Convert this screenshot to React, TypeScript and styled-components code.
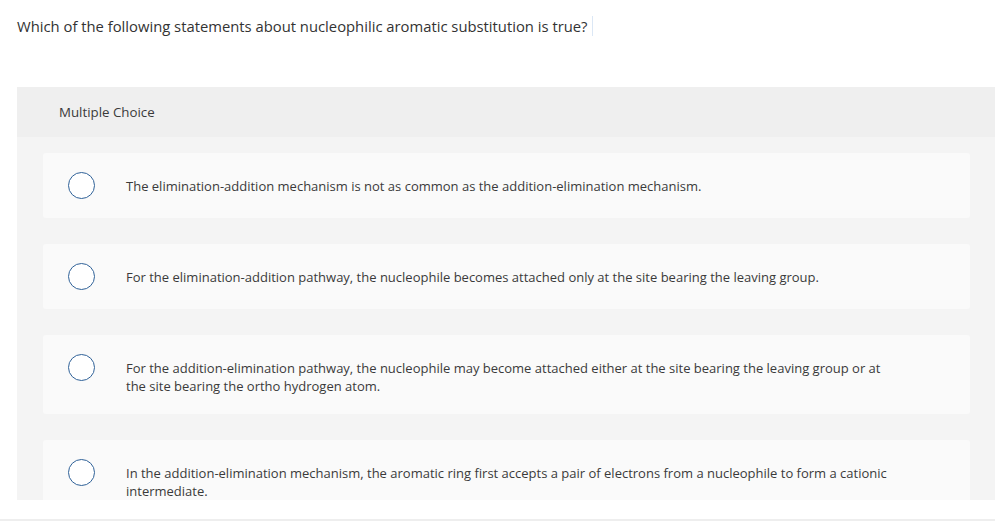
import * as React from 'react';
import styled, {createGlobalStyle} from 'styled-components';

const choices = [
    'The elimination-addition mechanism is not as common as the addition-elimination mechanism.',
    'For the elimination-addition pathway, the nucleophile becomes attached only at the site bearing the leaving group.',
    'For the addition-elimination pathway, the nucleophile may become attached either at the site bearing the leaving group or at the site bearing the ortho hydrogen atom.',
    'In the addition-elimination mechanism, the aromatic ring first accepts a pair of electrons from a nucleophile to form a cationic intermediate.',
];

export default function App() {
    return (
        <>
            <GlobalStyle/>
            <Page>
                <Scroller>
                    <Question>
                        Which of the following statements about nucleophilic aromatic substitution is true?
                        <Caret/>
                    </Question>
                    <Panel>
                        <PanelHeader>Multiple Choice</PanelHeader>
                        <ChoiceList>
                            {choices.map(text => (
                                <Choice key={text}>
                                    <Radio/>
                                    <ChoiceText>{text}</ChoiceText>
                                </Choice>
                            ))}
                        </ChoiceList>
                    </Panel>
                </Scroller>
                <Footer/>
            </Page>
        </>
    );
}

const GlobalStyle = createGlobalStyle`
  html, body {
    margin: 0;
    padding: 0;
    background: #fff;
  }
  body {
    font-family: "Open Sans", "Liberation Sans", sans-serif;
    color: #333;
  }
`;

const Page = styled.div`
  width: 995px;
  height: 525px;
  overflow: hidden;
`;

const Scroller = styled.div`
  height: 500px;
  overflow: hidden;
  padding-left: 17px;
  box-sizing: border-box;
`;

const Question = styled.div`
  padding-top: 16px;
  font-size: 14.8px;
  line-height: 18px;
  color: #333;
  display: flex;
  align-items: center;
`;

const Caret = styled.span`
  display: inline-block;
  width: 1px;
  height: 20px;
  margin-left: 5px;
  background: #dbe7f5;
`;

const Panel = styled.div`
  margin-top: 51px;
  background: #f4f4f4;
`;

const PanelHeader = styled.div`
  height: 50px;
  display: flex;
  align-items: center;
  padding-left: 42px;
  background: #efefef;
  font-size: 13.3px;
  color: #3a3a3a;
`;

const ChoiceList = styled.div`
  display: flex;
  flex-direction: column;
  gap: 26px;
  padding: 16px 25px 26px 26px;
`;

const Choice = styled.div`
  display: flex;
  align-items: flex-start;
  padding: 19px 80px 19px 25px;
  background: #fafafa;
  border-radius: 3px;
`;

const Radio = styled.span`
  flex: none;
  width: 27px;
  height: 27px;
  box-sizing: border-box;
  border: 1.5px solid #2f6198;
  border-radius: 50%;
  background: #fff;
`;

const ChoiceText = styled.div`
  margin-left: 31px;
  padding-top: 5px;
  font-size: 13px;
  line-height: 18px;
  color: #3a3a3a;
`;

const Footer = styled.div`
  height: 25px;
  &::after {
    content: '';
    display: block;
    margin-top: 19px;
    height: 2px;
    background: #eeeeee;
  }
`;
